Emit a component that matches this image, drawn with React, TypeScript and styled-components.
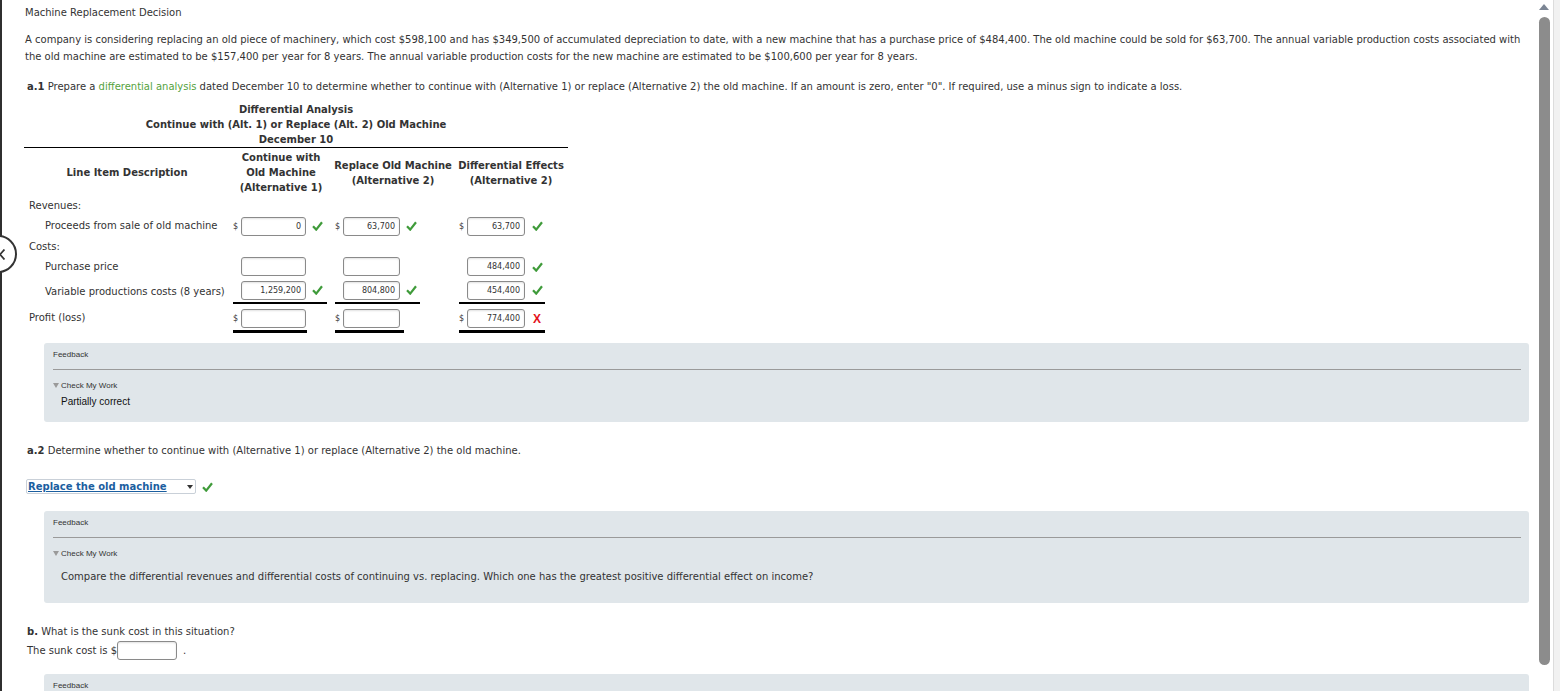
import React from 'react';
import styled, { createGlobalStyle } from 'styled-components';

const GlobalStyle = createGlobalStyle`
  html, body {
    margin: 0;
    padding: 0;
    background: #fff;
    overflow: hidden;
  }
  body {
    font-family: 'DejaVu Sans', Verdana, sans-serif;
    color: #333;
  }
`;

const Page = styled.div`
  position: relative;
  display: flex;
  height: 691px;
  overflow: hidden;
`;

const Main = styled.div`
  flex: 1;
  min-width: 0;
  border-left: 2px solid #2f2f2f;
  padding: 4px 2px 0 23px;
  font-size: 10px;
`;

const NavCircle = styled.div`
  position: absolute;
  left: -21px;
  top: 235px;
  width: 34px;
  height: 34px;
  border: 2px solid #333;
  border-radius: 50%;
  background: #fff;
  display: flex;
  align-items: center;
  justify-content: center;
  svg {
    margin-left: 8px;
  }
`;

const ScrollColumn = styled.div`
  width: 22px;
  display: flex;
  flex-direction: column;
  align-items: flex-start;
  padding: 4px 0 0 8px;
  box-sizing: border-box;
`;

const ScrollArrow = styled.div`
  width: 0;
  height: 0;
  border-left: 5px solid transparent;
  border-right: 5px solid transparent;
  border-bottom: 6px solid #7b8594;
`;

const ScrollThumb = styled.div`
  width: 11px;
  height: 648px;
  margin-top: 7px;
  border-radius: 6px;
  background: #8c8c8c;
`;

const ScrollEdge = styled.div`
  width: 6px;
  background: #f1f1f1;
  border-left: 1px solid #dcdcdc;
`;

const Title = styled.div`
  line-height: 17px;
`;

const Paragraph = styled.p`
  margin: 10px 0 0;
  line-height: 17px;
  white-space: nowrap;
`;

const Question = styled.div<{ $top: number }>`
  margin-top: ${(p) => p.$top}px;
  line-height: 17px;
  padding-left: 2px;
  white-space: nowrap;
`;

const Link = styled.span`
  color: #55a23d;
`;

const Table = styled.div`
  margin: 7px 0 0 -1px;
  width: 544px;
`;

const TableTitle = styled.div`
  text-align: center;
  font-weight: bold;
  line-height: 15px;
  border-bottom: 1px solid #000;
`;

const Row = styled.div<{ $h: number; $align?: string }>`
  display: grid;
  grid-template-columns: 206px 102px 122px 114px;
  height: ${(p) => p.$h}px;
  align-items: ${(p) => p.$align || 'center'};
`;

const HeadCell = styled.div`
  text-align: center;
  font-weight: bold;
  line-height: 15px;
  white-space: nowrap;
`;

const Label = styled.div<{ $indent?: boolean; $top?: number }>`
  padding-left: ${(p) => (p.$indent ? 21 : 5)}px;
  margin-top: ${(p) => p.$top || 0}px;
  line-height: 18px;
  white-space: nowrap;
`;

const Cell = styled.div<{ $pad: number; $top?: number }>`
  padding-left: ${(p) => p.$pad}px;
  margin-top: ${(p) => p.$top || 0}px;
`;

const Ruled = styled.div<{ $rule?: 'single' | 'double'; $w?: number }>`
  display: flex;
  align-items: center;
  width: ${(p) => (p.$w ? `${p.$w}px` : 'auto')};
  padding-bottom: ${(p) => (p.$rule ? 2 : 0)}px;
  border-bottom: ${(p) =>
    p.$rule === 'double' ? '3px solid #000' : p.$rule === 'single' ? '2px solid #000' : 'none'};
`;

const Dollar = styled.span`
  width: 8px;
  font-size: 8px;
  color: #333;
  flex: none;
`;

const AmountBox = styled.div<{ $w: number }>`
  box-sizing: border-box;
  width: ${(p) => p.$w}px;
  height: 19px;
  border: 1px solid #8a8a8a;
  border-radius: 3px;
  box-shadow: inset 0 1px 2px rgba(0, 0, 0, 0.12);
  background: #fff;
  padding-right: 4px;
  text-align: right;
  font-size: 8px;
  line-height: 17px;
  color: #333;
  flex: none;
`;

const Mark = styled.span<{ $gap: number }>`
  margin-left: ${(p) => p.$gap}px;
  display: inline-flex;
  align-items: center;
  flex: none;
`;

const Cross = styled.span`
  font-family: 'Liberation Sans', Arial, sans-serif;
  font-weight: bold;
  font-size: 12px;
  color: #e3121b;
  line-height: 12px;
`;

const Feedback = styled.div<{ $top: number; $bottom: number }>`
  margin: ${(p) => p.$top}px 0 0 19px;
  padding: 7px 8px ${(p) => p.$bottom}px 9px;
  background: #e0e6ea;
  border-radius: 3px;
  font-family: 'Liberation Sans', Arial, sans-serif;
`;

const FeedbackTitle = styled.div`
  font-size: 8px;
  line-height: 10px;
  color: #333;
`;

const FeedbackRule = styled.div`
  height: 1px;
  background: #9a9a9a;
  margin-top: 9px;
`;

const CheckWork = styled.div`
  display: flex;
  align-items: center;
  margin-top: 11px;
  font-size: 8px;
  line-height: 10px;
  color: #333;
`;

const Caret = styled.span`
  width: 0;
  height: 0;
  border-left: 3px solid transparent;
  border-right: 3px solid transparent;
  border-top: 5px solid #9a9a9a;
  margin: 0 2px 2px 0;
`;

const FeedbackBody = styled.div<{ $verdana?: boolean }>`
  margin-top: ${(p) => (p.$verdana ? 12 : 5)}px;
  padding-left: 8px;
  font-size: 10px;
  line-height: 12px;
  color: ${(p) => (p.$verdana ? '#333' : '#111')};
  font-family: ${(p) => (p.$verdana ? "'DejaVu Sans', Verdana, sans-serif" : 'inherit')};
  white-space: nowrap;
`;

const SelectRow = styled.div`
  display: flex;
  align-items: center;
  margin-top: 20px;
  height: 15px;
`;

const Select = styled.div`
  box-sizing: border-box;
  width: 170px;
  height: 15px;
  display: flex;
  align-items: center;
  justify-content: space-between;
  border: 1px solid #c9d0d8;
  border-radius: 2px;
  padding: 0 2px 0 1px;
  margin-left: 1px;
`;

const SelectText = styled.span`
  font-weight: bold;
  color: #1b5e9f;
  text-decoration: underline;
  font-size: 10px;
`;

const SelectArrow = styled.span`
  width: 0;
  height: 0;
  border-left: 3px solid transparent;
  border-right: 3px solid transparent;
  border-top: 4px solid #333;
`;

const SunkLine = styled.div`
  display: flex;
  align-items: center;
  height: 20px;
  padding-left: 2px;
`;

const Period = styled.span`
  margin-left: 6px;
`;

const Check = () => (
  <svg width="11" height="10" viewBox="0 0 11 10">
    <path d="M1 5.2 L4.2 8.6 L10 1.2" fill="none" stroke="#3f9b3a" strokeWidth="2.2" />
  </svg>
);

type MoneyProps = {
  w: number;
  value?: string;
  dollar?: boolean;
  mark?: 'ok' | 'bad';
  gap?: number;
  rule?: 'single' | 'double';
  ruleW?: number;
};

const Money = ({ w, value, dollar, mark, gap = 7, rule, ruleW }: MoneyProps) => (
  <Ruled $rule={rule} $w={ruleW}>
    <Dollar>{dollar ? '$' : ''}</Dollar>
    <AmountBox $w={w}>{value}</AmountBox>
    {mark === 'ok' && (
      <Mark $gap={gap}>
        <Check />
      </Mark>
    )}
    {mark === 'bad' && (
      <Mark $gap={gap}>
        <Cross>X</Cross>
      </Mark>
    )}
  </Ruled>
);

export default function App() {
  return (
    <Page>
      <GlobalStyle />
      <NavCircle>
        <svg width="6" height="11" viewBox="0 0 6 11">
          <path d="M5.5 0.5 L1 5.5 L5.5 10.5" fill="none" stroke="#333" strokeWidth="1.8" />
        </svg>
      </NavCircle>
      <Main>
        <Title>Machine Replacement Decision</Title>
        <Paragraph>
          A company is considering replacing an old piece of machinery, which cost $598,100 and has
          $349,500 of accumulated depreciation to date, with a new machine that has a purchase price
          of $484,400. The old machine could be sold for $63,700. The annual variable production
          costs associated with
          <br />
          the old machine are estimated to be $157,400 per year for 8 years. The annual variable
          production costs for the new machine are estimated to be $100,600 per year for 8 years.
        </Paragraph>
        <Question $top={13}>
          <b>a.1</b> Prepare a <Link>differential analysis</Link> dated December 10 to determine
          whether to continue with (Alternative 1) or replace (Alternative 2) the old machine. If an
          amount is zero, enter "0". If required, use a minus sign to indicate a loss.
        </Question>

        <Table>
          <TableTitle>
            Differential Analysis
            <br />
            Continue with (Alt. 1) or Replace (Alt. 2) Old Machine
            <br />
            December 10
          </TableTitle>
          <Row $h={49}>
            <HeadCell>Line Item Description</HeadCell>
            <HeadCell>
              Continue with
              <br />
              Old Machine
              <br />
              (Alternative 1)
            </HeadCell>
            <HeadCell>
              Replace Old Machine
              <br />
              (Alternative 2)
            </HeadCell>
            <HeadCell>
              Differential Effects
              <br />
              (Alternative 2)
            </HeadCell>
          </Row>
          <Row $h={17}>
            <Label>Revenues:</Label>
          </Row>
          <Row $h={24}>
            <Label $indent>Proceeds from sale of old machine</Label>
            <Cell $pad={3}>
              <Money w={65} value="0" dollar mark="ok" gap={6} />
            </Cell>
            <Cell $pad={3}>
              <Money w={57} value="63,700" dollar mark="ok" gap={6} />
            </Cell>
            <Cell $pad={5}>
              <Money w={58} value="63,700" dollar mark="ok" gap={7} />
            </Cell>
          </Row>
          <Row $h={16}>
            <Label>Costs:</Label>
          </Row>
          <Row $h={25}>
            <Label $indent>Purchase price</Label>
            <Cell $pad={3}>
              <Money w={65} />
            </Cell>
            <Cell $pad={3}>
              <Money w={57} />
            </Cell>
            <Cell $pad={5}>
              <Money w={58} value="484,400" mark="ok" gap={7} />
            </Cell>
          </Row>
          <Row $h={26}>
            <Label $indent>Variable productions costs (8 years)</Label>
            <Cell $pad={3}>
              <Money w={65} value="1,259,200" mark="ok" gap={6} rule="single" ruleW={94} />
            </Cell>
            <Cell $pad={3}>
              <Money w={57} value="804,800" mark="ok" gap={6} rule="single" ruleW={85} />
            </Cell>
            <Cell $pad={5}>
              <Money w={58} value="454,400" mark="ok" gap={7} rule="single" ruleW={86} />
            </Cell>
          </Row>
          <Row $h={29} $align="start">
            <Label $top={4}>Profit (loss)</Label>
            <Cell $pad={3} $top={4}>
              <Money w={65} dollar rule="double" ruleW={74} />
            </Cell>
            <Cell $pad={3} $top={4}>
              <Money w={57} dollar rule="double" ruleW={69} />
            </Cell>
            <Cell $pad={5} $top={4}>
              <Money w={58} value="774,400" dollar mark="bad" gap={8} rule="double" ruleW={86} />
            </Cell>
          </Row>
        </Table>

        <Feedback $top={9} $bottom={14}>
          <FeedbackTitle>Feedback</FeedbackTitle>
          <FeedbackRule />
          <CheckWork>
            <Caret />
            Check My Work
          </CheckWork>
          <FeedbackBody>Partially correct</FeedbackBody>
        </Feedback>

        <Question $top={20}>
          <b>a.2</b> Determine whether to continue with (Alternative 1) or replace (Alternative 2)
          the old machine.
        </Question>
        <SelectRow>
          <Select>
            <SelectText>Replace the old machine</SelectText>
            <SelectArrow />
          </Select>
          <Mark $gap={6}>
            <Check />
          </Mark>
        </SelectRow>

        <Feedback $top={17} $bottom={20}>
          <FeedbackTitle>Feedback</FeedbackTitle>
          <FeedbackRule />
          <CheckWork>
            <Caret />
            Check My Work
          </CheckWork>
          <FeedbackBody $verdana>
            Compare the differential revenues and differential costs of continuing vs. replacing.
            Which one has the greatest positive differential effect on income?
          </FeedbackBody>
        </Feedback>

        <Question $top={20}>
          <b>b.</b> What is the sunk cost in this situation?
        </Question>
        <SunkLine>
          The sunk cost is $
          <AmountBox $w={60} />
          <Period>.</Period>
        </SunkLine>

        <Feedback $top={14} $bottom={40}>
          <FeedbackTitle>Feedback</FeedbackTitle>
        </Feedback>
      </Main>
      <ScrollColumn>
        <ScrollArrow />
        <ScrollThumb />
      </ScrollColumn>
      <ScrollEdge />
    </Page>
  );
}
